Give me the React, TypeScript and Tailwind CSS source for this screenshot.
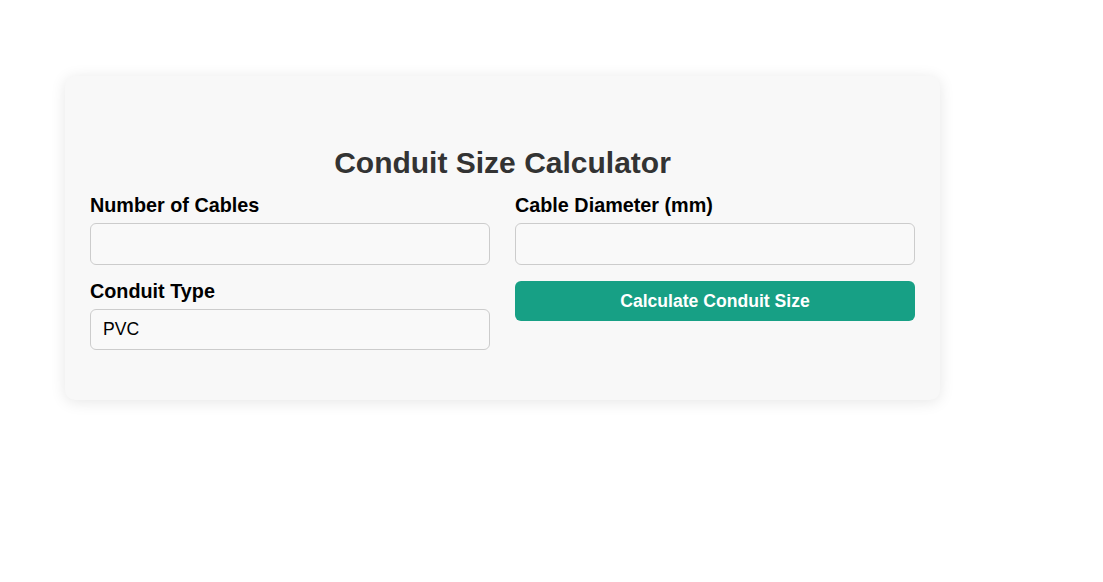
import React from "react";

export default function App() {
  return (
    <div className="min-h-screen bg-white pt-[76px] pl-[65px]" style={{ fontFamily: '"Liberation Sans", Arial, sans-serif' }}>
      <div className="w-[875px] rounded-[10px] bg-[#f8f8f8] px-[25px] pt-[69px] pb-[50px] shadow-[0_2px_15px_rgba(0,0,0,0.1)]">
        <h2 className="mb-[13px] text-center text-[30px] font-bold leading-[36px] text-[#333]">Conduit Size Calculator</h2>
        <div className="grid grid-cols-2 gap-x-[25px] gap-y-[15px]">
          <div>
            <label className="mb-[6px] block text-[19.8px] font-bold leading-[23px] text-black">Number of Cables</label>
            <input className="block h-[42px] w-full rounded-[6px] border border-[#ccc] bg-[#f9f9f9] px-[12px] text-[17.6px] text-black outline-none" />
          </div>
          <div>
            <label className="mb-[6px] block text-[19.8px] font-bold leading-[23px] text-black">Cable Diameter (mm)</label>
            <input className="block h-[42px] w-full rounded-[6px] border border-[#ccc] bg-[#f9f9f9] px-[12px] text-[17.6px] text-black outline-none" />
          </div>
          <div>
            <label className="mb-[6px] block text-[19.8px] font-bold leading-[23px] text-black">Conduit Type</label>
            <input defaultValue="PVC" className="block h-[41px] w-full rounded-[6px] border border-[#ccc] bg-[#f9f9f9] px-[12px] text-[17.6px] text-black outline-none" />
          </div>
          <div className="pt-[1px]">
            <button className="h-[40px] w-full rounded-[6px] bg-[#17a085] text-[17.6px] font-bold text-white">Calculate Conduit Size</button>
          </div>
        </div>
      </div>
    </div>
  );
}
